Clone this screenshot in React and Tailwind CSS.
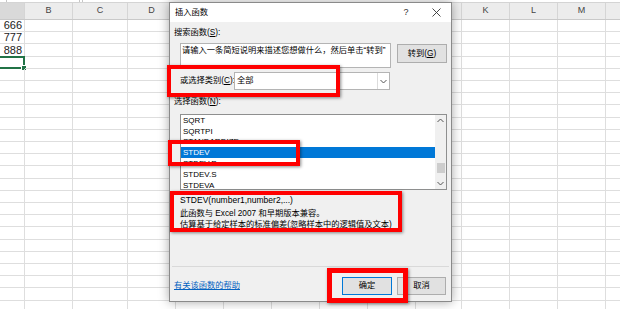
import React from "react";

const cols = [
  { l: "", w: "w-[25px]", sel: true },
  { l: "B", w: "w-[48px]" },
  { l: "C", w: "w-[55px]" },
  { l: "D", w: "w-[48px]" },
  { l: "", w: "w-[48px]" },
  { l: "", w: "w-[48px]" },
  { l: "", w: "w-[48px]" },
  { l: "", w: "w-[48px]" },
  { l: "", w: "w-[48px]" },
  { l: "", w: "w-[46px]" },
  { l: "K", w: "w-[48px]" },
  { l: "L", w: "w-[48px]" },
  { l: "M", w: "w-[48px]" },
  { l: "", w: "w-[48px]" },
];

const values = ["666", "777", "888"];
const rows = Array.from({ length: 24 }, (_, i) => i);

const items = ["SQRT", "SQRTPI", "STANDARDIZE", "STDEV", "STDEV.P", "STDEV.S", "STDEVA"];

function Chevron({ up }) {
  return (
    <svg width="7" height="5" viewBox="0 0 7 5" className="block">
      <polyline
        points={up ? "0.5,4 3.5,1 6.5,4" : "0.5,1 3.5,4 6.5,1"}
        fill="none"
        stroke="#555"
        strokeWidth="1"
      />
    </svg>
  );
}

function Sheet() {
  return (
    <div className="flex flex-col font-['Liberation_Sans',sans-serif]">
      <div className="flex h-[3px] border-b border-[#d4d4d4] bg-white">
        <div className="w-[7px] border-r border-[#c6c6c6]" />
        <div className="w-[73px] border-r border-[#c6c6c6]" />
        <div className="w-[2px]" />
        <div className="flex-1 border-l border-[#c6c6c6]" />
      </div>
      <div className="flex h-[17px] border-b border-[#c9c9c9]">
        {cols.map((c, i) => (
          <div
            key={i}
            className={`${c.w} shrink-0 border-r border-[#d5d5d5] flex items-center justify-center text-[9px] text-[#444] ${
              c.sel ? "bg-[#d9d9d9]" : "bg-[#ececec]"
            }`}
          >
            {c.l}
          </div>
        ))}
      </div>
      {rows.map((r) => (
        <div key={r} className="flex h-[12.217px] shrink-0">
          {cols.map((c, i) => (
            <div
              key={i}
              className={`${c.w} shrink-0 relative border-r border-b border-[#dedede] text-[11px] leading-[11px] text-[#222] flex items-center justify-end pr-[2px]`}
            >
              {i === 0 && r < 3 ? values[r] : null}
              {i === 0 && r === 3 ? (
                <>
                  <div className="absolute -left-[2px] -top-[1px] right-[-1px] bottom-[-1px] border-2 border-[#217346]" />
                  <div className="absolute right-[-3px] bottom-[-3px] w-[4px] h-[4px] bg-[#217346] border border-white box-content" />
                </>
              ) : null}
            </div>
          ))}
        </div>
      ))}
    </div>
  );
}

function Dialog() {
  return (
    <div className="absolute left-[169px] top-[2px] w-[283px] h-[300px] border border-[#8a8a8a] bg-[#f0f0f0] shadow-[0_0_10px_rgba(0,0,0,0.35)] flex flex-col font-['Liberation_Sans','Noto_Sans_CJK_SC',sans-serif] text-[8.25px] text-black">
      {/* title bar */}
      <div className="h-[19px] bg-white flex items-center shrink-0">
        <span className="ml-[5px] leading-[10px]">插入函数</span>
        <div className="ml-auto w-[30px] flex justify-center text-[9px] text-[#333]">?</div>
        <div className="w-[30px] flex justify-center">
          <svg width="9" height="9" viewBox="0 0 9 9">
            <path d="M0.5 0.5 L8.5 8.5 M8.5 0.5 L0.5 8.5" stroke="#333" strokeWidth="0.9" />
          </svg>
        </div>
      </div>

      {/* body */}
      <div className="flex flex-col flex-1">
        <div className="mt-[6px] ml-[4px] h-[10px] leading-[10px]">
          搜索函数(<u>S</u>):
        </div>
        <div className="mt-[5px] ml-[10px] flex items-start">
          <div className="w-[211px] h-[25px] bg-white border border-[#b4b4b4] pl-[1px] pt-[2px] leading-[10px]">
            请输入一条简短说明来描述您想做什么，然后单击“转到”
          </div>
          <div className="ml-[6px] mt-[1px] w-[50px] h-[19px] bg-[#e1e1e1] border border-[#adadad] flex items-center justify-center leading-[10px]">
            转到(<u>G</u>)
          </div>
        </div>
        <div className="mt-[4px] ml-[10px] flex items-center">
          <div className="w-[54px] leading-[10px] whitespace-nowrap">
            或选择类别(<u>C</u>):
          </div>
          <div className="w-[156px] h-[18px] bg-white border border-[#b4b4b4] flex items-center">
            <span className="pl-[2px] leading-[10px]">全部</span>
            <div className="ml-auto h-full w-[12px] border-l border-[#dcdcdc] flex items-center justify-center">
              <Chevron />
            </div>
          </div>
        </div>
        <div className="mt-[7px] ml-[4px] h-[10px] leading-[10px]">
          选择函数(<u>N</u>):
        </div>
        <div className="mt-[7px] ml-[10px] w-[267px] h-[76px] bg-white border border-[#8e8f8f] flex overflow-hidden">
          <div className="flex-1 flex flex-col">
            {items.map((it) => (
              <div
                key={it}
                className={`h-[10.8px] shrink-0 flex items-center pl-[2px] text-[8px] leading-[9px] ${
                  it === "STDEV" ? "bg-[#0078d7] text-white" : "text-black"
                }`}
              >
                {it}
              </div>
            ))}
          </div>
          <div className="w-[11px] bg-[#f0f0f0] flex flex-col items-center">
            <div className="h-[11px] flex items-center justify-center">
              <Chevron up />
            </div>
            <div className="flex-1 w-full flex flex-col items-center">
              <div className="mt-[37px] w-[8px] h-[10px] bg-[#cdcdcd]" />
            </div>
            <div className="h-[11px] flex items-center justify-center">
              <Chevron />
            </div>
          </div>
        </div>
        <div className="mt-[5px] ml-[10px] h-[11px] leading-[11px] text-[8.5px]">
          STDEV(number1,number2,...)
        </div>
        <div className="mt-[2px] ml-[10px] h-[11px] leading-[11px]">
          此函数与 Excel 2007 和早期版本兼容。
        </div>
        <div className="ml-[10px] h-[11px] leading-[11px]">
          估算基于给定样本的标准偏差(忽略样本中的逻辑值及文本)
        </div>
        <div className="mt-[36px] mx-[2px] h-px bg-[#d9d9d9]" />
        <div className="mt-[10px] flex items-center">
          <span className="ml-[4px] text-[#0563c1] underline leading-[10px]">有关该函数的帮助</span>
          <div className="ml-auto w-[50px] h-[18px] bg-[#e1e1e1] border border-[#0078d7] flex items-center justify-center leading-[10px]">
            确定
          </div>
          <div className="ml-[5px] mr-[5px] w-[49px] h-[18px] bg-[#e1e1e1] border border-[#adadad] flex items-center justify-center leading-[10px]">
            取消
          </div>
        </div>
      </div>
    </div>
  );
}

export default function App() {
  return (
    <div className="relative w-[620px] h-[309px] overflow-hidden bg-white">
      <Sheet />
      <Dialog />
      {/* annotation boxes */}
      <div className="absolute left-[167px] top-[65px] w-[173px] h-[32px] border-4 border-[#ff0000] shadow-[1px_1px_3px_rgba(0,0,0,0.45)]" />
      <div className="absolute left-[168px] top-[140px] w-[132px] h-[26px] border-4 border-[#ff0000] shadow-[1px_1px_3px_rgba(0,0,0,0.45)]" />
      <div className="absolute left-[170px] top-[191px] w-[232px] h-[41px] border-4 border-[#ff0000] shadow-[1px_1px_3px_rgba(0,0,0,0.45)]" />
      <div className="absolute left-[327px] top-[268px] w-[81px] h-[35px] border-[5px] border-[#ff0000] shadow-[1px_1px_3px_rgba(0,0,0,0.45)]" />
    </div>
  );
}
